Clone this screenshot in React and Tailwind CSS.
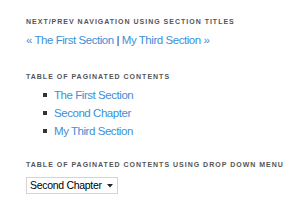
import React from "react";

const sections = ["The First Section", "Second Chapter", "My Third Section"];

const Heading = ({ children, className = "" }) => (
  <h4
    className={`text-[7px] font-bold uppercase tracking-[1px] text-[#555] leading-[10px] ${className}`}
  >
    {children}
  </h4>
);

const App = () => {
  return (
    <div className="w-[300px] h-[200px] overflow-hidden bg-white pl-[26px] pt-[17px] font-['Liberation_Sans',Arial,sans-serif]">
      <Heading>Next/Prev navigation using section titles</Heading>
      <p className="mt-[6px] text-[11.5px] leading-[14px] tracking-[-0.45px] text-[#333]">
        <a href="#" className="text-[#3d8fd9]">
          « The First Section
        </a>{" "}
        |{" "}
        <a href="#" className="text-[#3d8fd9]">
          My Third Section »
        </a>
      </p>

      <Heading className="mt-[25px]">Table of paginated contents</Heading>
      <ul className="mt-[4px] pl-[17px] text-[11.5px] leading-[18px] tracking-[-0.45px]">
        {sections.map((s) => (
          <li key={s} className="flex items-center gap-[7px]">
            <span className="w-[4px] h-[4px] bg-[#333] mt-[-1px]" />
            <a href="#" className="text-[#3d8fd9]">
              {s}
            </a>
          </li>
        ))}
      </ul>

      <Heading className="mt-[20px]">
        Table of paginated contents using drop down menu
      </Heading>
      <div className="mt-[7px] flex items-center w-[92px] h-[17px] border border-[#d4d4d4] bg-white pl-[3px] pr-[4px] text-[10.5px] leading-[15px] tracking-[-0.3px] text-black whitespace-nowrap">
        <span>Second Chapter</span>
        <svg className="ml-auto" width="6" height="4" viewBox="0 0 6 4">
          <path d="M0 0h6L3 3.5z" fill="#222" />
        </svg>
      </div>
    </div>
  );
};

export default App;
